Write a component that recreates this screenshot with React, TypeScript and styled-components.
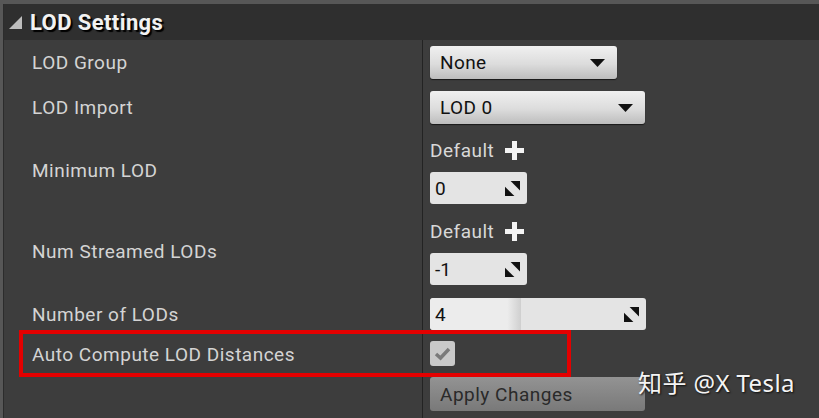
import React from 'react';
import styled, { createGlobalStyle } from 'styled-components';

const GlobalStyle = createGlobalStyle`
  html, body {
    margin: 0;
    padding: 0;
    background: #3d3d3d;
  }
  body {
    font-family: Roboto, "Noto Sans", "Noto Sans CJK SC", sans-serif;
  }
`;

const Frame = styled.div`
  position: relative;
  width: 819px;
  height: 418px;
  overflow: hidden;
  background: #575757;
  padding: 4px 0 0 3px;
  box-sizing: border-box;
`;

const Panel = styled.div`
  height: 100%;
  background: #3d3d3d;
  border-left: 1px solid #2c2c2c;
  display: flex;
  flex-direction: column;
`;

const Header = styled.div`
  height: 36px;
  flex: none;
  background: #2f2f2f;
  display: flex;
  align-items: center;
  gap: 8px;
  padding-left: 5px;
`;

const Title = styled.div`
  font-weight: 700;
  font-size: 22px;
  letter-spacing: 0.4px;
  color: #f2f2f2;
  text-shadow: 2px 2px 1px #000;
`;

const Row = styled.div`
  display: grid;
  grid-template-columns: 419px 1fr;
  flex: none;
`;

const Label = styled.div`
  display: flex;
  align-items: center;
  padding-left: 28px;
  font-size: 19px;
  letter-spacing: 0.5px;
  color: #d4d4d4;
  border-right: 1px solid #232323;
`;

const Value = styled.div<{ $top: number; $bottom: number }>`
  display: flex;
  flex-direction: column;
  align-items: flex-start;
  gap: 10px;
  padding: ${(p) => p.$top}px 0 ${(p) => p.$bottom}px 7px;
`;

const Combo = styled.div<{ $w: number }>`
  width: ${(p) => p.$w}px;
  height: 33px;
  box-sizing: border-box;
  border-radius: 3px;
  background: linear-gradient(#f0f0f0, #dcdcdc 55%, #bdbdbd);
  box-shadow: 0 1px 1px rgba(0, 0, 0, 0.6);
  display: flex;
  align-items: center;
  justify-content: space-between;
  padding: 0 12px 0 10px;
  font-size: 19px;
  letter-spacing: 0.4px;
  color: #111;
`;

const DefaultLine = styled.div`
  height: 24px;
  display: flex;
  align-items: center;
  gap: 11px;
  font-size: 19px;
  letter-spacing: 0.5px;
  color: #d8d8d8;
`;

const NumBox = styled.div<{ $w: number }>`
  position: relative;
  width: ${(p) => p.$w}px;
  height: 32px;
  box-sizing: border-box;
  border-radius: 3px;
  background: #e4e4e4;
  display: flex;
  align-items: center;
  justify-content: space-between;
  padding: 0 7px 0 5px;
  font-size: 19px;
  color: #111;
  overflow: hidden;
`;

const SliderFill = styled.div`
  position: absolute;
  left: 0;
  top: 0;
  bottom: 0;
  width: 91px;
  background: linear-gradient(90deg, #ececec 85%, #cfcfcf);
  border-radius: 3px 0 0 3px;
`;

const BoxText = styled.span`
  position: relative;
`;

const Check = styled.div`
  width: 25px;
  height: 25px;
  border-radius: 3px;
  background: #c9c9c9;
  display: flex;
  align-items: center;
  justify-content: center;
`;

const ApplyButton = styled.div`
  width: 215px;
  height: 34px;
  box-sizing: border-box;
  border-radius: 3px;
  background: linear-gradient(#939393, #797979);
  display: flex;
  align-items: center;
  padding-left: 10px;
  font-size: 19px;
  letter-spacing: 0.5px;
  color: #2a2a2a;
`;

const Highlight = styled.div`
  position: absolute;
  left: 19px;
  top: 330px;
  width: 552px;
  height: 47px;
  box-sizing: border-box;
  border: 4px solid #e40000;
`;

const Watermark = styled.div`
  position: absolute;
  left: 638px;
  top: 364px;
  font-size: 24px;
  letter-spacing: 0.4px;
  color: #f4f4f4;
  font-family: "Noto Sans", "Noto Sans CJK SC", sans-serif;
  text-shadow: 1px 1px 2px rgba(0, 0, 0, 0.8);
  white-space: nowrap;
`;

const Arrow = () => (
  <svg width="15" height="8" viewBox="0 0 15 8">
    <polygon points="0,0 15,0 7.5,8" fill="#111" />
  </svg>
);

const Spin = () => (
  <svg width="15" height="15" viewBox="0 0 16 16">
    <polygon points="6,0 16,0 16,10" fill="#111" />
    <polygon points="0,6 0,16 10,16" fill="#111" />
  </svg>
);

const Plus = () => (
  <svg width="19" height="19" viewBox="0 0 19 19">
    <rect x="7" y="0" width="5" height="19" fill="#f4f4f4" />
    <rect x="0" y="7" width="19" height="5" fill="#f4f4f4" />
  </svg>
);

const Tick = () => (
  <svg width="17" height="14" viewBox="0 0 17 14">
    <polyline points="2,7 6.5,11 15,2" fill="none" stroke="#7a7a7a" strokeWidth="3.5" />
  </svg>
);

const Collapse = () => (
  <svg width="13" height="13" viewBox="0 0 13 13">
    <polygon points="13,0 13,13 0,13" fill="#bdbdbd" />
  </svg>
);

const App = () => (
  <>
    <GlobalStyle />
    <Frame>
      <Panel>
        <Header>
          <Collapse />
          <Title>LOD Settings</Title>
        </Header>

        <Row>
          <Label>LOD Group</Label>
          <Value $top={6} $bottom={6}>
            <Combo $w={187}>
              None
              <Arrow />
            </Combo>
          </Value>
        </Row>

        <Row>
          <Label>LOD Import</Label>
          <Value $top={6} $bottom={6}>
            <Combo $w={215}>
              LOD 0
              <Arrow />
            </Combo>
          </Value>
        </Row>

        <Row>
          <Label>Minimum LOD</Label>
          <Value $top={8} $bottom={7}>
            <DefaultLine>
              Default
              <Plus />
            </DefaultLine>
            <NumBox $w={97}>
              <BoxText>0</BoxText>
              <Spin />
            </NumBox>
          </Value>
        </Row>

        <Row>
          <Label>Num Streamed LODs</Label>
          <Value $top={8} $bottom={7}>
            <DefaultLine>
              Default
              <Plus />
            </DefaultLine>
            <NumBox $w={97}>
              <BoxText>-1</BoxText>
              <Spin />
            </NumBox>
          </Value>
        </Row>

        <Row>
          <Label>Number of LODs</Label>
          <Value $top={6} $bottom={6}>
            <NumBox $w={216}>
              <SliderFill />
              <BoxText>4</BoxText>
              <Spin />
            </NumBox>
          </Value>
        </Row>

        <Row>
          <Label>Auto Compute LOD Distances</Label>
          <Value $top={5} $bottom={6}>
            <Check>
              <Tick />
            </Check>
          </Value>
        </Row>

        <Row>
          <Label />
          <Value $top={5} $bottom={8}>
            <ApplyButton>Apply Changes</ApplyButton>
          </Value>
        </Row>
      </Panel>
      <Highlight />
      <Watermark>知乎 @X Tesla</Watermark>
    </Frame>
  </>
);

export default App;
